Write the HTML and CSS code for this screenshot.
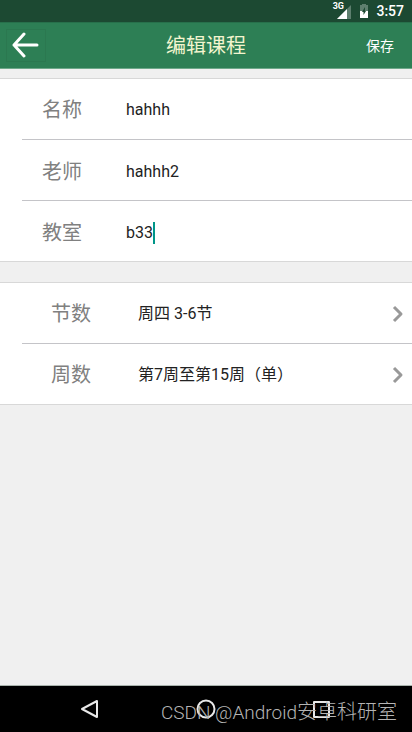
FILE: index.html
```html
<!DOCTYPE html>
<html lang="zh-CN">
<head>
<meta charset="utf-8">
<meta name="viewport" content="width=device-width, initial-scale=1">
<title>编辑课程</title>
<link rel="stylesheet" href="styles.css">
</head>
<body>
<div class="status">
  <svg class="signal" width="16" height="18" viewBox="0 0 16 18" aria-hidden="true">
    <path d="M15 3V17H1z" fill="#5d7f6e"/>
    <path d="M11 7V17H1z" fill="#fff"/>
  </svg>
  <span class="network">3G</span>
  <svg class="battery" width="10" height="16" viewBox="0 0 10 16" aria-hidden="true">
    <path d="M3 1h4v1h2v6H1V2h2z" fill="#5d7f6e"/>
    <path d="M1 8h8v7H1z" fill="#fff"/>
    <path d="M6 4L3 9H4.500V12L7 8H6z" fill="#1c4932"/>
  </svg>
  <time>3:57</time>
</div>
<header class="bar">
  <button class="back" type="button" aria-label="返回">
    <svg width="28" height="28" viewBox="0 0 28 28" fill="none" stroke="#fff" stroke-width="3" stroke-linecap="round" stroke-linejoin="round" aria-hidden="true"><path d="M25 13H2M12 2L2 13L12 24"/></svg>
  </button>
  <h1>编辑课程</h1>
  <button class="save" type="submit" form="course">保存</button>
</header>
<main>
  <form id="course">
    <div class="card">
      <div class="row"><label for="name">名称</label><input id="name" type="text" value="hahhh"></div>
      <div class="row"><label for="teacher">老师</label><input id="teacher" type="text" value="hahhh2"></div>
      <div class="row"><label for="room">教室</label><input id="room" class="active" type="text" value="b33"><span class="caret"></span></div>
    </div>
    <div class="card picks">
      <button class="row" type="button"><span class="label">节数</span><span class="value">周四 3-6节</span>
        <svg width="12" height="18" viewBox="0 0 12 18" fill="none" stroke="#999" stroke-width="3" stroke-linejoin="round" aria-hidden="true"><path d="M2 2L9 9L2 16"/></svg></button>
      <button class="row" type="button"><span class="label">周数</span><span class="value">第7周至第15周（单）</span>
        <svg width="12" height="18" viewBox="0 0 12 18" fill="none" stroke="#999" stroke-width="3" stroke-linejoin="round" aria-hidden="true"><path d="M2 2L9 9L2 16"/></svg></button>
    </div>
  </form>
</main>
<nav class="nav">
  <button type="button" aria-label="后退"><svg width="20" height="20" viewBox="0 0 20 20" aria-hidden="true"><path d="M17 2V18L2 10z"/></svg></button>
  <button type="button" aria-label="主页"><svg width="20" height="20" viewBox="0 0 20 20" aria-hidden="true"><circle cx="10" cy="10" r="8.500"/></svg></button>
  <button type="button" aria-label="最近"><svg width="20" height="20" viewBox="0 0 20 20" aria-hidden="true"><path d="M2 3H17V18H2z"/></svg></button>
  <span class="mark"><span class="latin">CSDN @Android</span>安卓科研室</span>
</nav>
</body>
</html>
```
FILE: styles.css
```css
* {
  box-sizing: border-box;
}

body {
  margin: 0;
  min-height: 100vh;
  display: flex;
  flex-direction: column;
  background: #f0f0f0;
  color: #222;
  font: 16px/24px Roboto, "Noto Sans CJK SC", sans-serif;
}

button,
input {
  margin: 0;
  padding: 0;
  border: 0;
  background: none;
  color: inherit;
  font: inherit;
  text-align: left;
}

.status {
  position: relative;
  display: flex;
  align-items: center;
  justify-content: flex-end;
  height: 22px;
  padding-right: 8px;
  background: #1c4932;
  color: #fff;
}

.network {
  position: absolute;
  right: 68px;
  top: 2px;
  font-size: 9px;
  line-height: 9px;
  font-weight: 700;
}

.battery {
  margin: 0 7px;
}

.status time {
  font-size: 14px;
  font-weight: 500;
}

.bar {
  display: grid;
  grid-template-columns: 1fr auto 1fr;
  align-items: center;
  height: 47px;
  border-top: 1px solid #27704b;
  border-bottom: 1px solid #6ea88a;
  background: #2d7f55;
  color: #fff;
}

.back {
  display: flex;
  align-items: center;
  width: 40px;
  height: 33px;
  margin-left: 6px;
  padding-left: 5px;
  border: 1px solid #2b7850;
}

.bar h1 {
  margin: 0;
  color: #f3f5cf;
  font-size: 20px;
  font-weight: 400;
}

.save {
  justify-self: end;
  padding-right: 18px;
  font-size: 14px;
}

main {
  flex: 1;
  padding-top: 9px;
}

.card {
  margin-bottom: 20px;
  border: solid #d8d8d8;
  border-width: 1px 0;
  background: #fff;
}

.row {
  display: flex;
  align-items: center;
  width: 100%;
  height: 60px;
  padding: 2px 0 0 42px;
}

.row + .row {
  height: 61px;
  padding-top: 4px;
  background: linear-gradient(#c4c4c8, #c4c4c8) 22px 0 / 100% 1px no-repeat;
}

.row label,
.label {
  width: 84px;
  color: #808080;
  font-size: 20px;
}

.row input {
  flex: 1;
  min-width: 0;
  height: 24px;
  outline: 0;
}

.row .active {
  flex: none;
  field-sizing: content;
}

.caret {
  width: 2px;
  height: 22px;
  background: #009688;
}

.picks .row {
  padding: 2px 8px 0 51px;
}

.label {
  width: 87px;
}

.value {
  flex: 1;
}

.nav {
  position: relative;
  display: flex;
  align-items: center;
  justify-content: center;
  gap: 96px;
  height: 47px;
  border-top: 1px solid #a9b3ac;
  background: #000;
}

.nav button {
  display: flex;
}

.nav svg {
  fill: none;
  stroke: #e8e8e8;
  stroke-width: 2;
  stroke-linejoin: round;
}

.mark {
  position: absolute;
  right: 15px;
  top: 14px;
  color: #b4b4b4;
  font-size: 20px;
  font-weight: 300;
}

.latin {
  font-size: 19px;
}
```
